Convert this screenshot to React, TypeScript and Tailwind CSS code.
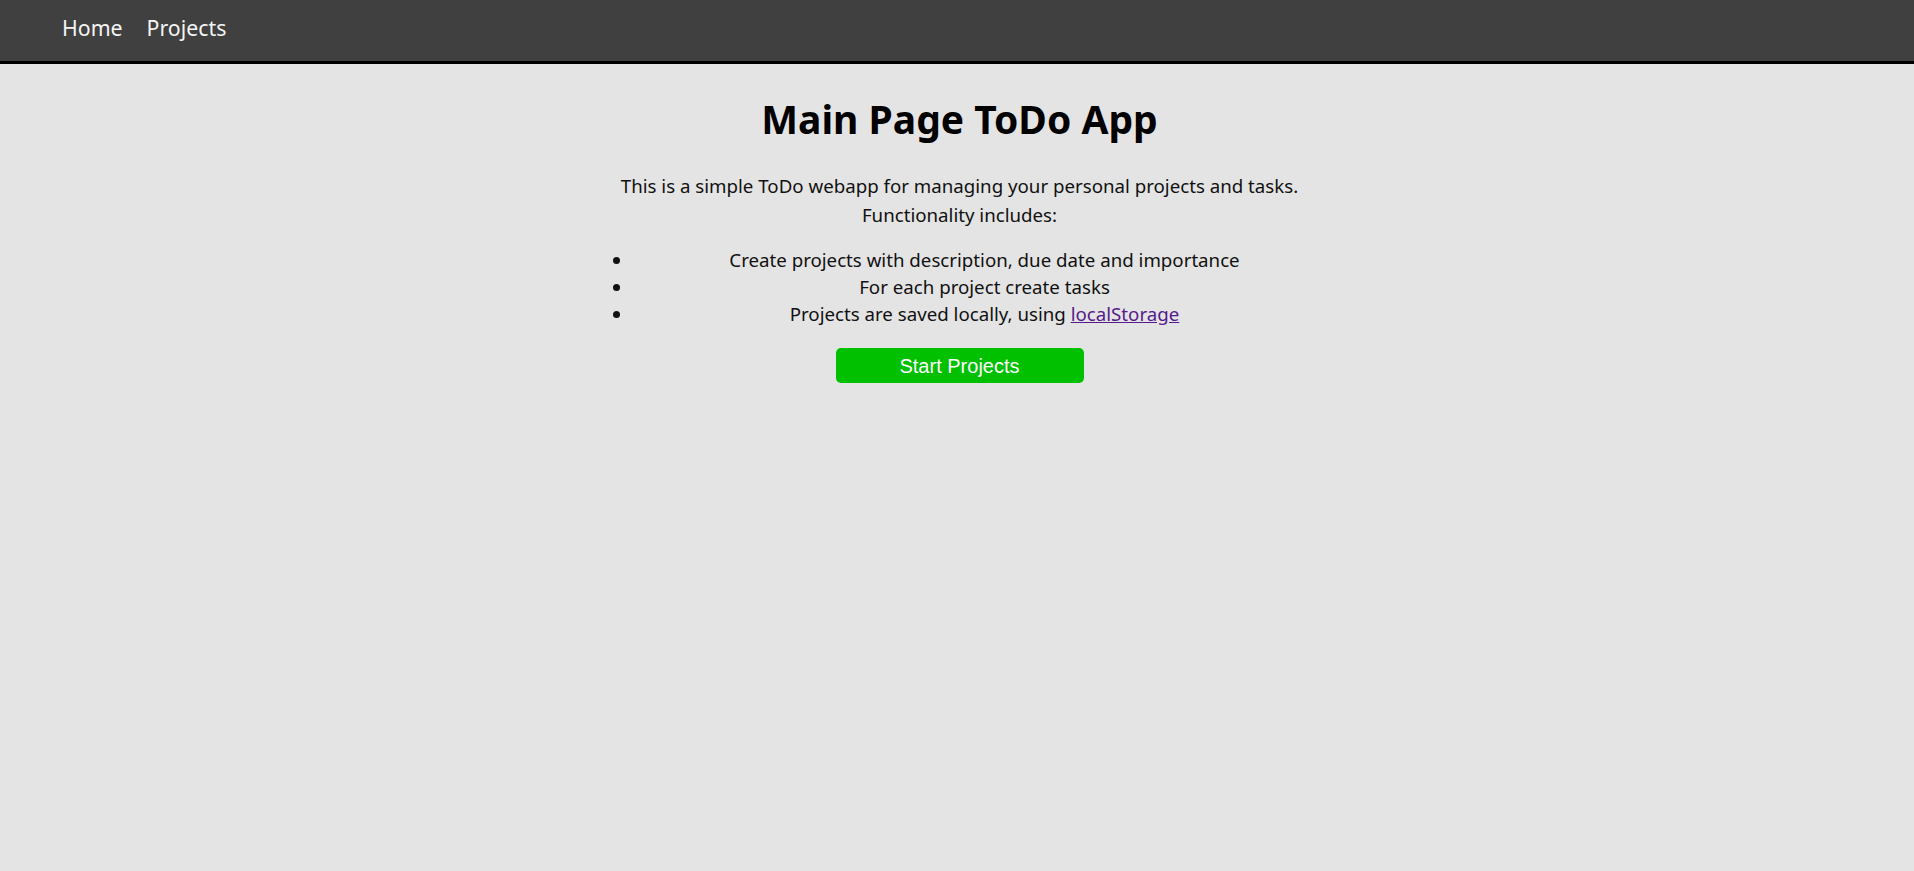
import React from "react";

export default function App() {
  return (
    <div className="min-h-[871px] bg-[#e4e4e4] font-['Noto_Sans','Open_Sans',sans-serif]">
      <nav className="h-[64px] bg-[#404040] border-b-[3px] border-black flex items-center pl-[62px] gap-[24px] pb-[6px]">
        <a className="text-[21.3px] text-[#f4f4f4] leading-none cursor-pointer">Home</a>
        <a className="text-[21.3px] text-[#f4f4f4] leading-none cursor-pointer">Projects</a>
      </nav>
      <main className="flex flex-col items-center pl-[5px]">
        <h1 className="mt-[28px] text-[39px] font-bold leading-[53px] text-black">Main Page ToDo App</h1>
        <div className="w-[758px] mt-[26px] text-[18.7px] text-[#111] text-center">
          <p className="leading-[29px]">
            This is a simple ToDo webapp for managing your personal projects and tasks.
            <br />
            Functionality includes:
          </p>
          <ul className="list-disc pl-[52px] pr-[2px] mt-[17px] leading-[27px]">
            <li>Create projects with description, due date and importance</li>
            <li>For each project create tasks</li>
            <li>
              Projects are saved locally, using{" "}
              <a className="text-[#551a8b] underline cursor-pointer">localStorage</a>
            </li>
          </ul>
        </div>
        <button className="mt-[21px] w-[248px] h-[35px] rounded-[5px] bg-[#00c000] text-white text-[20px] font-['Liberation_Sans',Arial,sans-serif] leading-none">
          Start Projects
        </button>
      </main>
    </div>
  );
}
